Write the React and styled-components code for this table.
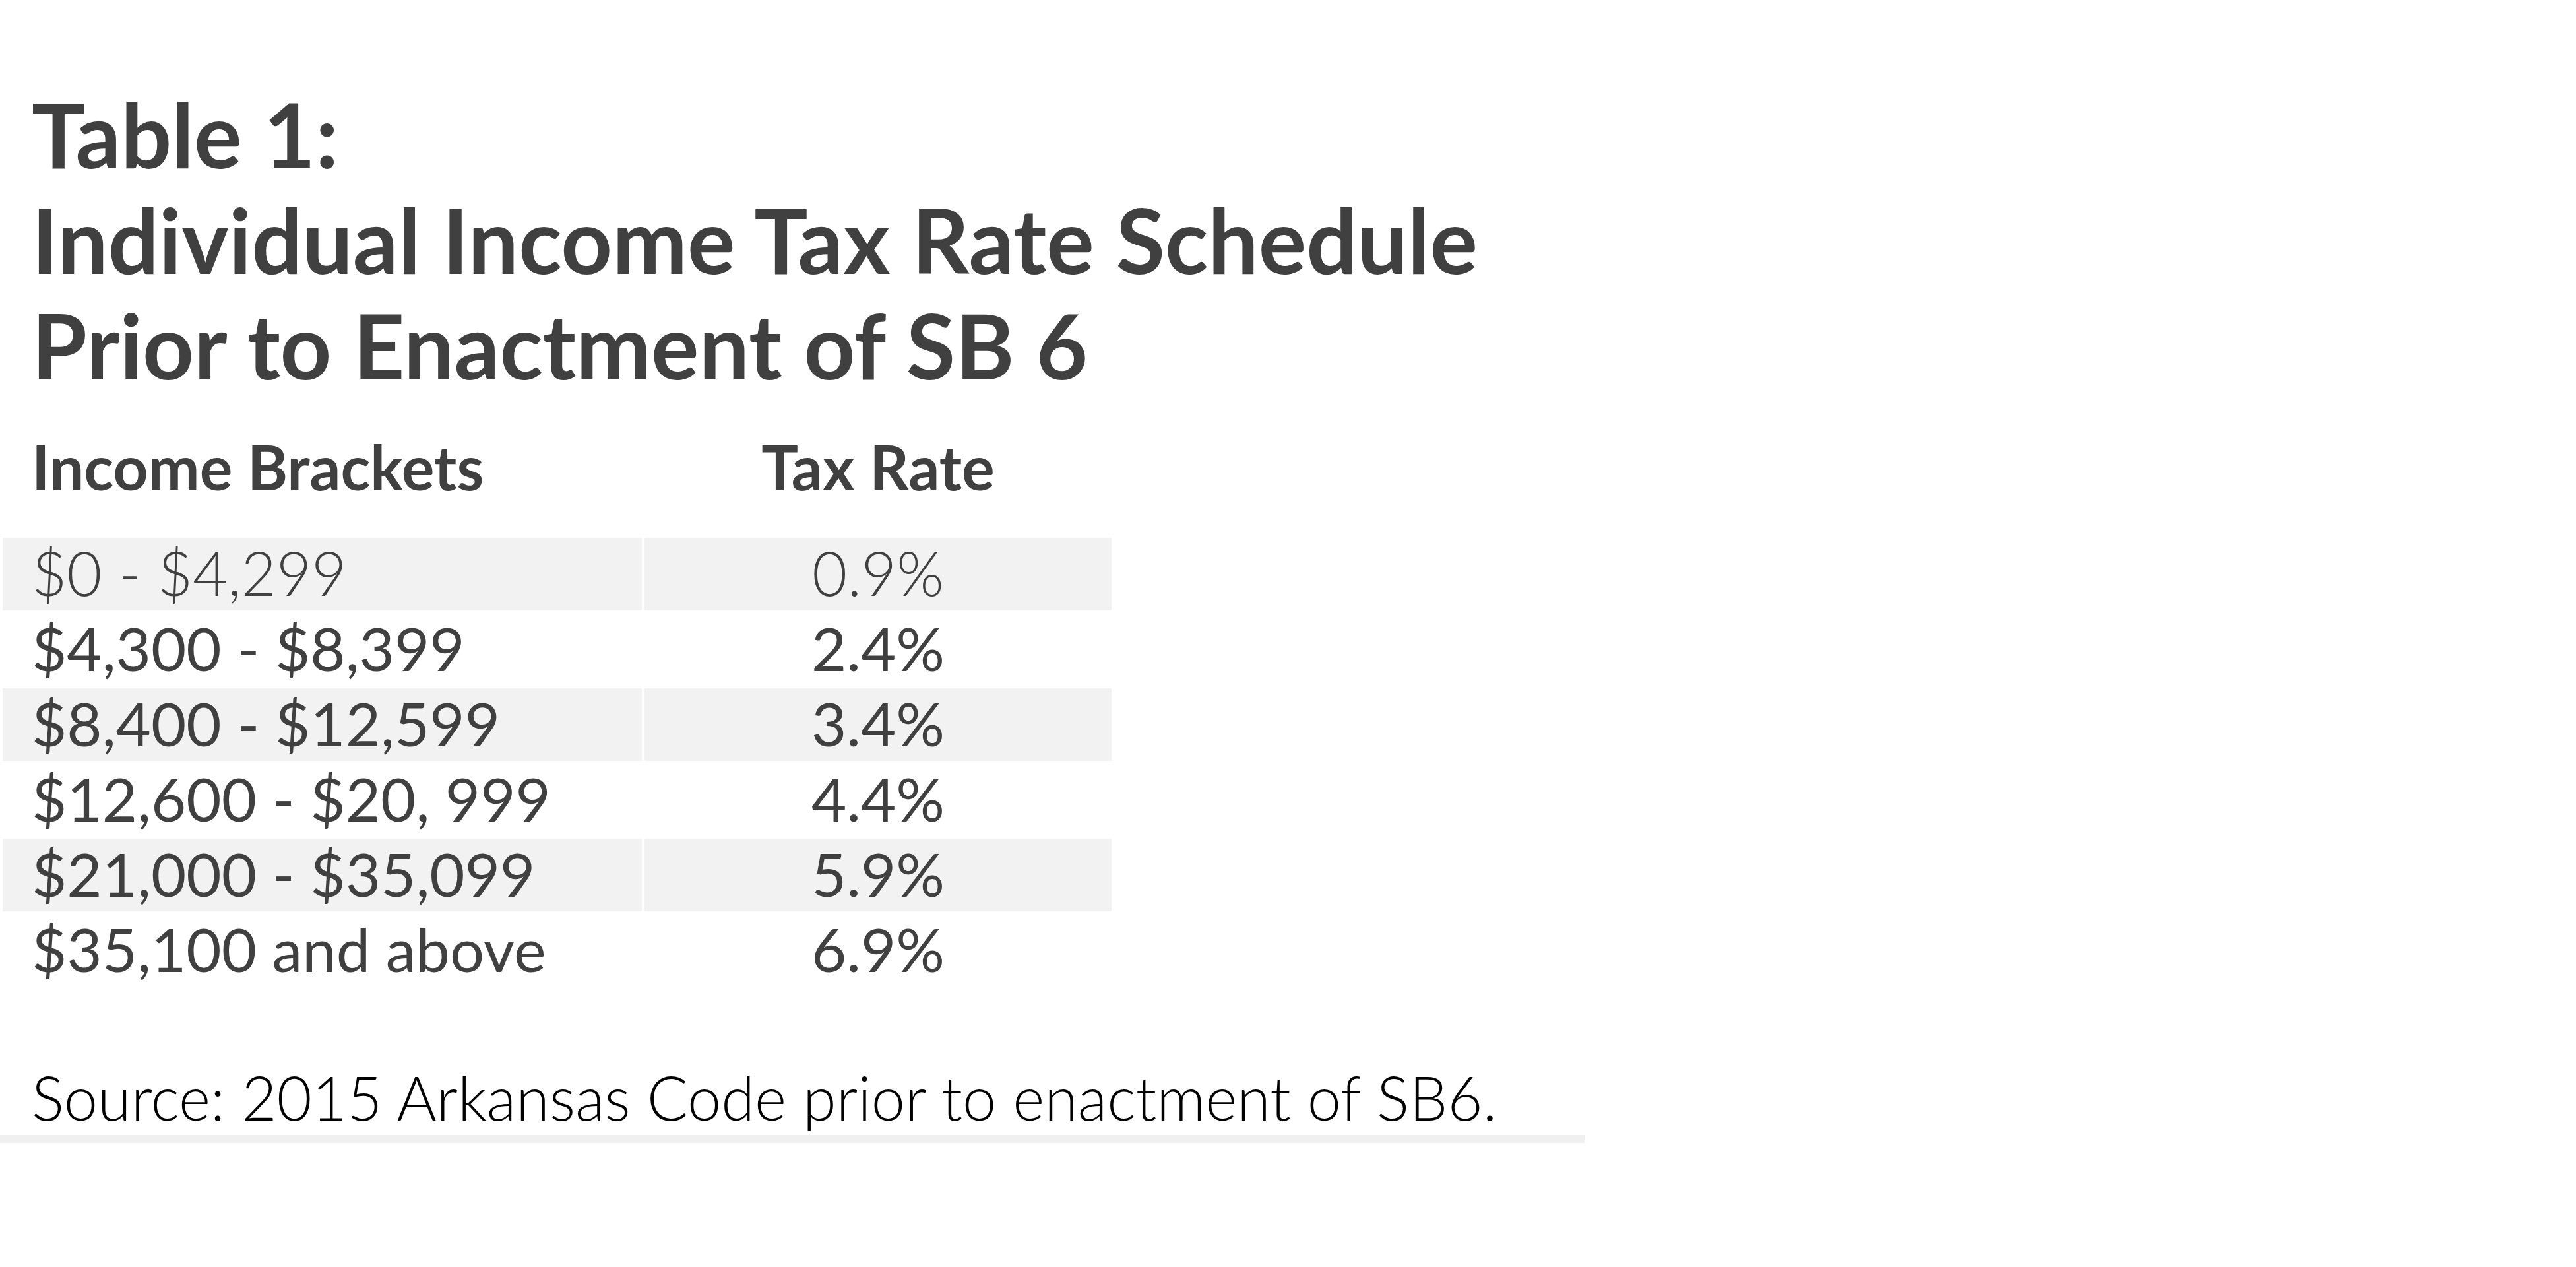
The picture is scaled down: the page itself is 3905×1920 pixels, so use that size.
import React from "react"
import styled, { createGlobalStyle } from "styled-components"

const GlobalStyle = createGlobalStyle`
  html, body {
    margin: 0;
    padding: 0;
    background: #fff;
  }
  body {
    font-family: Lato, "Open Sans", "Liberation Sans", sans-serif;
    color: #404040;
  }
`

const Page = styled.main({
  paddingTop: "123px",
  width: "3905px",
  minHeight: "1920px",
  boxSizing: "border-box",
})

const Title = styled.h1({
  margin: "0 0 0 48px",
  fontSize: "135.7px",
  lineHeight: "160px",
  fontWeight: 700,
  color: "#404040",
})

const RateTable = styled.div({
  display: "grid",
  gridTemplateColumns: "969px 708px",
  columnGap: "4px",
  rowGap: "4px",
  padding: "0 4px",
  width: "max-content",
})

const HeadCell = styled.div(({ $center }) => ({
  fontSize: "93px",
  lineHeight: "110px",
  fontWeight: 700,
  paddingLeft: $center ? 0 : "44px",
  textAlign: $center ? "center" : "left",
  marginTop: "49px",
  marginBottom: "49px",
}))

const Cell = styled.div(({ $center, $shaded, $light }) => ({
  height: "110px",
  fontSize: "92px",
  lineHeight: "106px",
  fontWeight: $light ? 300 : 400,
  background: $shaded ? "#f2f2f2" : "transparent",
  paddingLeft: $center ? 0 : "44px",
  textAlign: $center ? "center" : "left",
  whiteSpace: "nowrap",
}))

const Source = styled.p({
  margin: "113px 0 2px 48px",
  fontSize: "92px",
  lineHeight: "110px",
  fontWeight: 300,
  color: "#000",
})

const Rule = styled.div({
  width: "2402px",
  height: "12px",
  background: "#f0f0f0",
})

const rows = [
  ["$0 - $4,299", "0.9%"],
  ["$4,300 - $8,399", "2.4%"],
  ["$8,400 - $12,599", "3.4%"],
  ["$12,600 - $20, 999", "4.4%"],
  ["$21,000 - $35,099", "5.9%"],
  ["$35,100 and above", "6.9%"],
]

const App = () => {
  return (
    <>
      <GlobalStyle />
      <Page>
        <Title>
          Table 1:
          <br />
          Individual Income Tax Rate Schedule
          <br />
          Prior to Enactment of SB 6
        </Title>
        <RateTable>
          <HeadCell>Income Brackets</HeadCell>
          <HeadCell $center>Tax Rate</HeadCell>
          {rows.map(([bracket, rate], i) => (
            <React.Fragment key={bracket}>
              <Cell $shaded={i % 2 === 0} $light={i === 0}>{bracket}</Cell>
              <Cell $center $shaded={i % 2 === 0} $light={i === 0}>{rate}</Cell>
            </React.Fragment>
          ))}
        </RateTable>
        <Source>Source: 2015 Arkansas Code prior to enactment of SB6.</Source>
        <Rule />
      </Page>
    </>
  )
}

export default App
